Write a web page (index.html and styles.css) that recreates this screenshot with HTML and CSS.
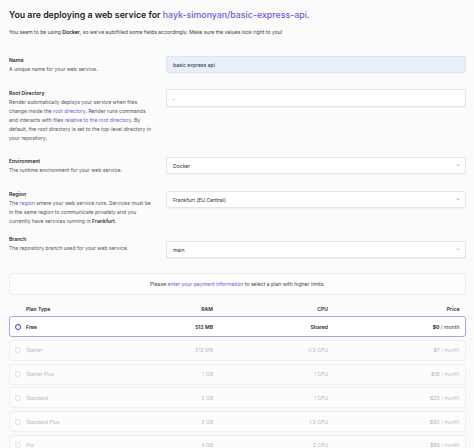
FILE: index.html
```html
<!DOCTYPE html>
<html lang="en">
<head>
<meta charset="utf-8">
<title>Deploy web service</title>
<link rel="stylesheet" href="styles.css">
</head>
<body>
<main class="page">
  <h1 class="title">You are deploying a web service for <a class="repo">hayk-simonyan/basic-express-api.</a></h1>
  <p class="intro">You seem to be using <b>Docker</b>, so we've autofilled some fields accordingly. Make sure the values look right to you!</p>

  <section class="fields">
    <div class="field">
      <div class="info">
        <div class="label">Name</div>
        <div class="desc">A unique name for your web service.</div>
      </div>
      <div class="control control-filled"><span>basic express api</span></div>
    </div>

    <div class="field">
      <div class="info">
        <div class="label">Root Directory</div>
        <div class="desc">Render automatically deploys your service when files change inside the <a class="link">root directory</a>. Render runs commands and interacts with files <a class="link">relative to the root directory</a>. By default, the root directory is set to the top-level directory in your repository.</div>
      </div>
      <div class="control control-root"><span>.</span></div>
    </div>

    <div class="field">
      <div class="info">
        <div class="label">Environment</div>
        <div class="desc">The runtime environment for your web service.</div>
      </div>
      <div class="control"><span>Docker</span><svg class="chev" viewBox="0 0 8 5"><path d="M1 1l3 3 3-3"/></svg></div>
    </div>

    <div class="field field-region">
      <div class="info">
        <div class="label">Region</div>
        <div class="desc">The <a class="link">region</a> where your web service runs. Services must be in the same region to communicate privately and you currently have services running in <b class="strong">Frankfurt</b>.</div>
      </div>
      <div class="control"><span>Frankfurt (EU Central)</span><svg class="chev" viewBox="0 0 8 5"><path d="M1 1l3 3 3-3"/></svg></div>
    </div>

    <div class="field field-branch">
      <div class="info">
        <div class="label">Branch</div>
        <div class="desc">The repository branch used for your web service.</div>
      </div>
      <div class="control"><span>main</span><svg class="chev" viewBox="0 0 8 5"><path d="M1 1l3 3 3-3"/></svg></div>
    </div>
  </section>

  <div class="notice">Please&nbsp;<a class="link">enter your payment information</a>&nbsp;to select a plan with higher limits.</div>

  <section class="plans">
    <div class="plan plan-head">
      <span></span>
      <span class="name">Plan Type</span>
      <span class="num">RAM</span>
      <span class="num">CPU</span>
      <span class="num">Price</span>
    </div>
    <div class="plan plan-selected">
      <span class="radio"></span>
      <span class="name">Free</span>
      <span class="num">512 MB</span>
      <span class="num">Shared</span>
      <span class="num"><b>$0</b> <span class="per">/ month</span></span>
    </div>
    <div class="plan">
      <span class="radio"></span>
      <span class="name">Starter</span>
      <span class="num">512 MB</span>
      <span class="num">0.5 CPU</span>
      <span class="num"><b>$7</b> <span class="per">/ month</span></span>
    </div>
    <div class="plan">
      <span class="radio"></span>
      <span class="name">Starter Plus</span>
      <span class="num">1 GB</span>
      <span class="num">1 CPU</span>
      <span class="num"><b>$15</b> <span class="per">/ month</span></span>
    </div>
    <div class="plan">
      <span class="radio"></span>
      <span class="name">Standard</span>
      <span class="num">2 GB</span>
      <span class="num">1 CPU</span>
      <span class="num"><b>$25</b> <span class="per">/ month</span></span>
    </div>
    <div class="plan">
      <span class="radio"></span>
      <span class="name">Standard Plus</span>
      <span class="num">3 GB</span>
      <span class="num">1.5 CPU</span>
      <span class="num"><b>$50</b> <span class="per">/ month</span></span>
    </div>
    <div class="plan">
      <span class="radio"></span>
      <span class="name">Pro</span>
      <span class="num">4 GB</span>
      <span class="num">2 CPU</span>
      <span class="num"><b>$85</b> <span class="per">/ month</span></span>
    </div>
  </section>
</main>
</body>
</html>
```

FILE: styles.css
```css
html, body {
  margin: 0;
  background: #fbfbfc;
}
body {
  font-family: Inter, "Noto Sans", "Liberation Sans", sans-serif;
  color: #1d1d22;
  overflow: hidden;
}
.page {
  padding: 8.5px 8px 0 9px;
}
.title {
  margin: 0;
  font-size: 8.8px;
  line-height: 12px;
  font-weight: 600;
  color: #1b1b1f;
}
.repo {
  color: #6b5bd6;
  font-weight: 500;
}
.intro {
  margin: 7px 0 0;
  font-size: 5.1px;
  line-height: 9px;
  color: #3c3c44;
}
.intro b { font-weight: 600; color: #222; }

.fields {
  margin-top: 19.5px;
  display: flex;
  flex-direction: column;
}
.field {
  display: grid;
  grid-template-columns: 157px 300px;
  align-items: start;
}
.field + .field { margin-top: 14.5px; }
.field-region { margin-top: 14px; }
.field-region .control { margin-top: 1.5px; }
.field-branch.field { margin-top: 9.5px; }
.field-branch .control { margin-top: 6px; }

.info { width: 146px; }
.label {
  font-size: 5.1px;
  line-height: 9px;
  font-weight: 600;
  color: #26262c;
}
.desc {
  font-size: 5.1px;
  line-height: 9px;
  color: #55555e;
}
.link { color: #6b5bd6; }
.strong { font-weight: 600; color: #333; }

.control {
  box-sizing: border-box;
  height: 17px;
  border: 1px solid #e6e6ea;
  border-radius: 3px;
  background: #fff;
  padding: 0 5px 0 6px;
  display: flex;
  align-items: center;
  justify-content: space-between;
  font-size: 5.1px;
  color: #2b2b31;
  box-shadow: 0 0.5px 1px rgba(20, 20, 40, 0.04);
}
.control-filled {
  background: #e9eefb;
  border-color: #dde4f4;
}
.control-root { height: 18px; }
.chev {
  width: 4px;
  height: 2.5px;
  fill: none;
  stroke: #8a8a94;
  stroke-width: 1.2;
}

.notice {
  margin-top: 15px;
  box-sizing: border-box;
  height: 22px;
  border: 1px solid #ececf0;
  border-radius: 4px;
  background: #fdfdfd;
  display: flex;
  align-items: center;
  justify-content: center;
  font-size: 5.1px;
  color: #44444c;
}

.plans {
  margin-top: 7px;
  display: flex;
  flex-direction: column;
  gap: 2.75px;
}
.plan {
  box-sizing: border-box;
  height: 21px;
  display: grid;
  grid-template-columns: 16px 107px 80px 115px 131.5px;
  align-items: center;
  padding: 0 5.5px 0 0;
  border: 1px solid #efeff2;
  border-radius: 3px;
  background: #fcfcfd;
  font-size: 5.1px;
  color: #b8b8bf;
}
.plan-head {
  height: 14px;
  border-color: transparent;
  background: transparent;
  font-weight: 600;
  color: #2a2a30;
  margin-bottom: -2.75px;
}
.num { text-align: right; }
.plan b { font-weight: 500; }
.per { color: #c4c4ca; }
.radio {
  box-sizing: border-box;
  width: 6px;
  height: 6px;
  margin-left: 5px;
  border-radius: 50%;
  border: 0.8px solid #e2e2e6;
  background: #fff;
}
.plan-selected {
  border-color: #aea2ea;
  background: #fff;
  color: #1f1f25;
  font-weight: 600;
}
.plan-selected .radio {
  border: 1.8px solid #4636b4;
}
.plan-selected b { font-weight: 700; }
.plan-selected .per { color: #55555e; font-weight: 500; }
```
